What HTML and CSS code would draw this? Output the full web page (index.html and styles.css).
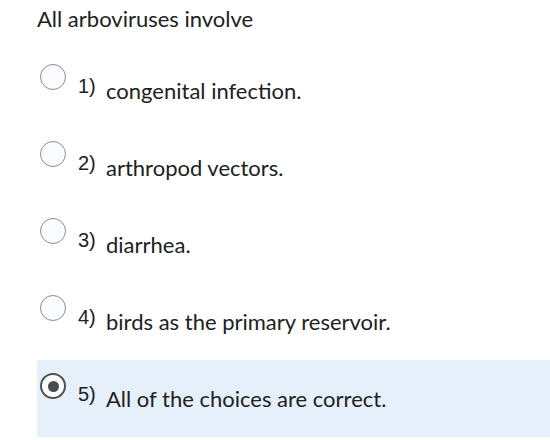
FILE: index.html
```html
<!DOCTYPE html>
<html>
<head>
<meta charset="utf-8">
<link rel="stylesheet" href="styles.css">
</head>
<body>
<div class="question">All arboviruses involve</div>
<div class="options">
  <div class="option">
    <span class="radio"></span>
    <span class="num">1)</span>
    <span class="text">congenital infection.</span>
  </div>
  <div class="option">
    <span class="radio"></span>
    <span class="num">2)</span>
    <span class="text">arthropod vectors.</span>
  </div>
  <div class="option">
    <span class="radio"></span>
    <span class="num">3)</span>
    <span class="text">diarrhea.</span>
  </div>
  <div class="option">
    <span class="radio"></span>
    <span class="num">4)</span>
    <span class="text">birds as the primary reservoir.</span>
  </div>
  <div class="option selected">
    <span class="radio checked"></span>
    <span class="num">5)</span>
    <span class="text">All of the choices are correct.</span>
  </div>
</div>
</body>
</html>
```

FILE: styles.css
```css
html, body {
  margin: 0;
  padding: 0;
  background: #ffffff;
}
body {
  color: #202122;
  font-family: Lato, "Liberation Sans", sans-serif;
  width: 550px;
  height: 440px;
  overflow: hidden;
}
.question {
  font-size: 22px;
  line-height: 26px;
  padding: 6px 0 0 37px;
  height: 46px;
  box-sizing: border-box;
}
.options {
  margin-left: 37px;
  margin-top: 6px;
  display: flex;
  flex-direction: column;
}
.option {
  display: flex;
  align-items: flex-start;
  height: 77px;
  padding-left: 3px;
  box-sizing: border-box;
}
.option.selected {
  background: #e6f0fa;
}
.radio {
  box-sizing: border-box;
  width: 26px;
  height: 26px;
  border-radius: 50%;
  border: 1px solid #8b8e91;
  background: #f9fbff;
  margin-top: 12px;
  flex: none;
  display: flex;
  align-items: center;
  justify-content: center;
}
.radio.checked {
  border: 2px solid #4f5254;
  margin-top: 13px;
  background: #ffffff;
}
.radio.checked::after {
  content: "";
  width: 11px;
  height: 11px;
  border-radius: 50%;
  background: #494c4e;
}
.num {
  font-family: "Liberation Sans", Arial, sans-serif;
  font-size: 20px;
  line-height: 24px;
  margin-top: 22px;
  margin-left: 12px;
  width: 28px;
  flex: none;
}
.text {
  font-size: 22px;
  line-height: 26px;
  margin-top: 26px;
}
```
